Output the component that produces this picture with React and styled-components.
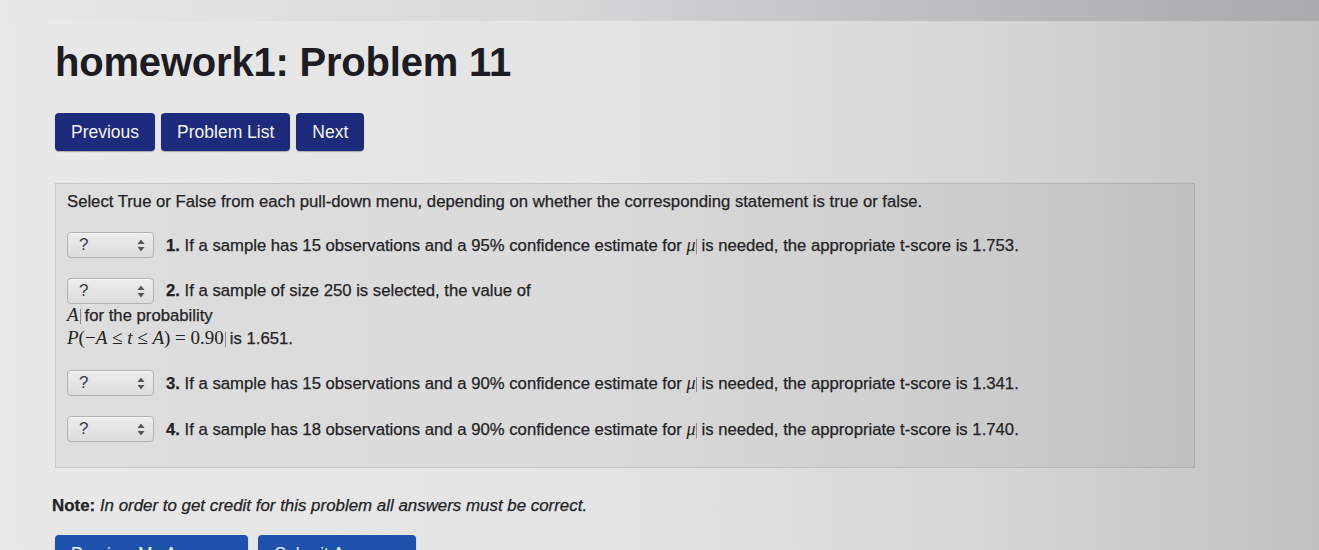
import React from "react";
import styled, { createGlobalStyle } from "styled-components";

const GlobalStyle = createGlobalStyle`
  html, body {
    margin: 0;
    padding: 0;
  }
  body {
    font-family: "Liberation Sans", Arial, sans-serif;
    color: #232325;
    background: linear-gradient(90deg, #e8e8e9 0%, #e4e4e5 45%, #d6d6d7 75%, #c2c1c2 100%);
    min-height: 550px;
    overflow: hidden;
  }
`;

const Page = styled.div`
  position: relative;
  padding: 40px 0 0 55px;
  height: 510px;
  overflow: hidden;
`;

// darker strip at the top edge of the photographed screen
const Bezel = styled.div`
  position: absolute;
  top: 0;
  left: 0;
  right: 0;
  height: 21px;
  background: linear-gradient(90deg, rgba(170, 172, 174, 0) 0%, rgba(170, 172, 174, 0.2) 40%, rgba(165, 167, 169, 0.85) 100%);
`;

const Title = styled.h1`
  margin: 0;
  font-size: 40px;
  line-height: 44px;
  font-weight: 700;
  color: #1c1c22;
  letter-spacing: -0.2px;
`;

const NavRow = styled.div`
  display: flex;
  gap: 6px;
  margin-top: 29px;
`;

const NavButton = styled.button`
  height: 38px;
  padding: 0 16px;
  border: none;
  border-radius: 4px;
  background: ${(props) => (props.$bright ? "#1f52ad" : "#1d2b7c")};
  color: #f4f5fa;
  font-family: "Liberation Sans", Arial, sans-serif;
  font-size: 17.5px;
  cursor: pointer;
  box-shadow: 0 1px 1px rgba(0, 0, 0, 0.25);
`;

const ProblemBox = styled.div`
  width: 1140px;
  box-sizing: border-box;
  margin-top: 32px;
  padding: 7px 11px 25px;
  background: rgba(0, 0, 0, 0.045);
  border: 1px solid rgba(0, 0, 0, 0.09);
  display: flex;
  flex-direction: column;
  gap: 20px;
  -webkit-text-stroke: 0.25px #232325;
`;

const Line = styled.p`
  margin: 0;
  font-size: 16.7px;
  line-height: 21px;
`;

const Statement = styled.div`
  display: flex;
  flex-direction: column;
`;

const Row = styled.div`
  display: flex;
  align-items: center;
  gap: 12px;
  font-size: 16.7px;
`;

const SelectBox = styled.div`
  width: 87px;
  height: 26px;
  flex-shrink: 0;
  box-sizing: border-box;
  display: flex;
  align-items: center;
  justify-content: space-between;
  padding: 0 8px 0 11px;
  border: 1px solid #b3b3b4;
  border-radius: 4px;
  background: linear-gradient(#ededee, #dcdcdd);
  box-shadow: inset 0 1px 0 rgba(255, 255, 255, 0.6);
  font-size: 17px;
  color: #3a3a3c;
  -webkit-text-stroke: 0;
`;

const Num = styled.b`
  font-weight: 700;
`;

const MathVar = styled.i`
  font-family: "Liberation Serif", "Times New Roman", serif;
  font-style: italic;
  font-size: ${(props) => props.$size || "18px"};
  -webkit-text-stroke: 0;
`;

const Caret = styled.span`
  display: inline-block;
  width: 1px;
  height: 15px;
  margin: 0 4px 0 1px;
  background: #8a8a8c;
  vertical-align: -3px;
`;

const MathLine = styled.div`
  font-size: 16.7px;
  line-height: 22px;
`;

const Formula = styled.span`
  font-family: "Liberation Serif", "Times New Roman", serif;
  font-size: 19px;
  -webkit-text-stroke: 0;
`;

const Note = styled.p`
  margin: 27px 0 0 -3px;
  font-size: 16.9px;
  line-height: 21px;
  -webkit-text-stroke: 0.25px #232325;
`;

const BottomRow = styled(NavRow)`
  gap: 10px;
  margin-top: 19px;
`;

const Arrows = () => (
  <svg width="8" height="13" viewBox="0 0 8 13">
    <path d="M4 0.5 L7.5 5 L0.5 5 Z" fill="#55565a" />
    <path d="M4 12.5 L7.5 8 L0.5 8 Z" fill="#55565a" />
  </svg>
);

const Select = () => (
  <SelectBox>
    <span>?</span>
    <Arrows />
  </SelectBox>
);

const Mu = () => (
  <>
    {" "}
    <MathVar>μ</MathVar>
    <Caret />
  </>
);

const statements = [
  { n: 1, obs: 15, conf: 95, t: "1.753" },
  { n: 3, obs: 15, conf: 90, t: "1.341" },
  { n: 4, obs: 18, conf: 90, t: "1.740" },
];

const ConfidenceRow = ({ n, obs, conf, t }) => (
  <Row>
    <Select />
    <span>
      <Num>{n}.</Num> If a sample has {obs} observations and a {conf}% confidence estimate for
      <Mu />
      is needed, the appropriate t-score is {t}.
    </span>
  </Row>
);

export default function App() {
  return (
    <>
      <GlobalStyle />
      <Page>
        <Bezel />
        <Title>homework1: Problem 11</Title>
        <NavRow>
          <NavButton>Previous</NavButton>
          <NavButton>Problem List</NavButton>
          <NavButton>Next</NavButton>
        </NavRow>

        <ProblemBox>
          <Line>
            Select True or False from each pull-down menu, depending on whether the corresponding
            statement is true or false.
          </Line>
          <ConfidenceRow {...statements[0]} />
          <Statement>
            <Row>
              <Select />
              <span>
                <Num>2.</Num> If a sample of size 250 is selected, the value of
              </span>
            </Row>
            <MathLine>
              <MathVar $size="19px">A</MathVar>
              <Caret />
              for the probability
            </MathLine>
            <MathLine>
              <Formula>
                <i>P</i>(−<i>A</i> ≤ <i>t</i> ≤ <i>A</i>) = 0.90
              </Formula>
              <Caret />
              is 1.651.
            </MathLine>
          </Statement>
          <ConfidenceRow {...statements[1]} />
          <ConfidenceRow {...statements[2]} />
        </ProblemBox>

        <Note>
          <b>Note:</b> <i>In order to get credit for this problem all answers must be correct.</i>
        </Note>
        <BottomRow>
          <NavButton $bright>Preview My Answers</NavButton>
          <NavButton $bright>Submit Answers</NavButton>
        </BottomRow>
      </Page>
    </>
  );
}
